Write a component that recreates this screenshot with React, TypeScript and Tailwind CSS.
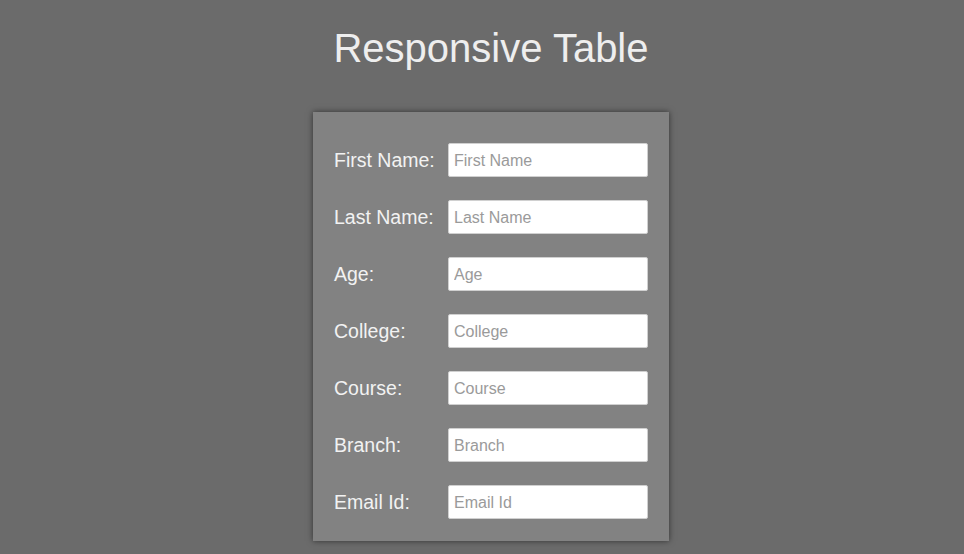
const fields = ["First Name", "Last Name", "Age", "College", "Course", "Branch", "Email Id"];

export default function App() {
  return (
    <div
      className="min-h-[554px] w-full bg-[#6b6b6b] pt-[28px] pl-[18px]"
      style={{ fontFamily: '"Liberation Sans", Arial, sans-serif' }}
    >
      <h1 className="text-center text-[40px] leading-[40px] text-[#eeeeee]">Responsive Table</h1>

      <div className="mx-auto mt-[44px] w-[356px] bg-[#828282] px-[21px] pt-[31px] pb-[22px] shadow-[0_0_6px_rgba(0,0,0,0.55)]">
        <div className="flex flex-col gap-[23px]">
          {fields.map((f) => (
            <div key={f} className="flex items-center">
              <label className="w-[114px] pt-[1px] text-[19.5px] text-[#f2f2f2]">{f}:</label>
              <input
                type="text"
                placeholder={f}
                className="h-[34px] w-[200px] rounded-[2px] border border-[#d0d0d0] bg-white px-[5px] pt-[2px] text-[16px] text-[#333] placeholder:text-[#9a9a9a] outline-none"
              />
            </div>
          ))}
        </div>
      </div>
    </div>
  );
}
